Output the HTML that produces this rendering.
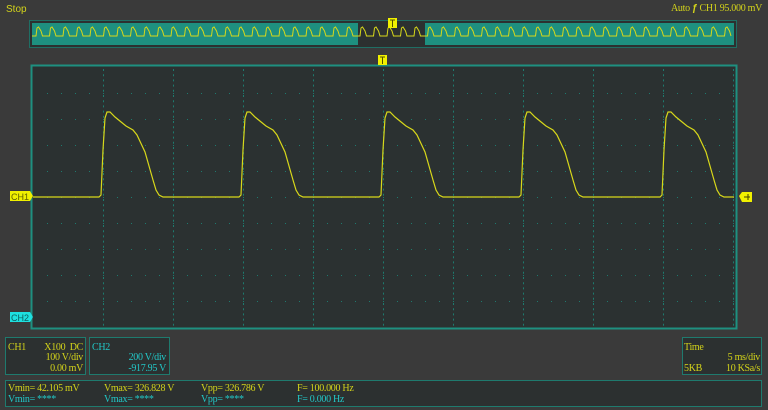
<!DOCTYPE html>
<html><head><meta charset="utf-8">
<style>
html,body{margin:0;padding:0;background:#3a3a3a;width:768px;height:410px;overflow:hidden;font-family:"Liberation Serif",serif;}
.t{position:absolute;font-size:10px;line-height:11px;white-space:nowrap;letter-spacing:-0.3px}
.y{color:#d4d41a}.c{color:#22c8c8}
.r{text-align:right}
.box{position:absolute;border:1px solid #1f7a6e;background:#2c3030;box-sizing:border-box}
</style></head><body>
<div class="t y" style="left:6px;top:4px;font-family:'Liberation Sans',sans-serif;font-size:10px;letter-spacing:0">Stop</div>
<div class="t y r" style="left:600px;width:162px;top:3px;">Auto <b style="font-family:'Liberation Sans'">ƒ</b> CH1 95.000 mV</div>
<svg id="s" width="768" height="410" style="position:absolute;left:0;top:0"></svg>
<div class="box" style="left:5px;top:337px;width:81px;height:38px"></div>
<div class="box" style="left:89px;top:337px;width:81px;height:38px"></div>
<div class="t y" style="left:8px;top:342px">CH1</div>
<div class="t y r" style="left:30px;width:53px;top:342px">X100&nbsp; DC</div>
<div class="t y r" style="left:30px;width:53px;top:352px">100 V/div</div>
<div class="t y r" style="left:30px;width:53px;top:363px">0.00 mV</div>
<div class="t c" style="left:92px;top:342px">CH2</div>
<div class="t c r" style="left:100px;width:66px;top:352px">200 V/div</div>
<div class="t c r" style="left:100px;width:66px;top:363px">-917.95 V</div>
<div class="box" style="left:682px;top:337px;width:80px;height:38px"></div>
<div class="t y" style="left:684px;top:342px">Time</div>
<div class="t y r" style="left:700px;top:352px;width:60px">5 ms/div</div>
<div class="t y" style="left:684px;top:363px">5KB</div>
<div class="t y r" style="left:700px;top:363px;width:60px">10 KSa/s</div>
<div class="box" style="left:5px;top:380px;width:757px;height:27px"></div>
<div class="t y" style="left:8px;top:383px">Vmin= 42.105 mV</div>
<div class="t y" style="left:104px;top:383px">Vmax= 326.828 V</div>
<div class="t y" style="left:201px;top:383px">Vpp= 326.786 V</div>
<div class="t y" style="left:297px;top:383px">F= 100.000 Hz</div>
<div class="t c" style="left:8px;top:394px">Vmin= ****</div>
<div class="t c" style="left:104px;top:394px">Vmax= ****</div>
<div class="t c" style="left:201px;top:394px">Vpp= ****</div>
<div class="t c" style="left:297px;top:394px">F= 0.000 Hz</div>
<script>
var s='';
s+='<rect x="29.5" y="20.5" width="707" height="27" fill="#2c3030" stroke="#1f6e64"/>';
s+='<rect x="32" y="23" width="326" height="22" fill="#1e9080"/>';
s+='<rect x="425" y="23" width="309" height="22" fill="#1e9080"/>';
var m='M32,36';
for(var x=32;x<734;x+=13.5){m+=' L'+(x+4)+',36 L'+(x+5)+',28 L'+(x+6.5)+',27 L'+(x+9)+',31 L'+(x+10.5)+',36';}
s+='<path d="'+m+'" fill="none" stroke="#d8d81a" stroke-width="1"/>';
s+='<rect x="31.5" y="65.5" width="705" height="263" fill="#2b3131" stroke="#1e9080" stroke-width="2"/>';
var d='';
for(var r=1;r<10;r++){var yy=67+26*r;for(var c=47;c<=735;c+=14){d+='M'+c+','+yy+'h1v1h-1z';}}
for(var c=103;c<735;c+=70){for(var yy=69;yy<326;yy+=5.2){d+='M'+c+','+yy.toFixed(1)+'h1v2h-1z';}}
s+='<path d="'+d+'" fill="#1e7a6e"/>';
var p='M33,197';
var pts=[[-2,197],[0,195],[2,150],[4,118],[6,112],[9,112],[14,117],[25,126],[32,130],[36,135],[44,152],[52,180],[55,190],[58,195],[62,197]];
[101,241,381,521,662].forEach(function(x0){pts.forEach(function(q){var X=x0+q[0];if(X<734)p+=' L'+X+','+q[1];});p+=' L'+Math.min(x0+140-2,734)+',197';});
s+='<path d="'+p+'" fill="none" stroke="#d8d81a" stroke-width="1.2"/>';
s+='<path d="M10,191h20l3,5l-3,5h-20z" fill="#f0f000"/><text x="11" y="200" font-size="9" font-family="Liberation Sans" fill="#606000">CH1</text>';
s+='<path d="M10,312h20l3,5l-3,5h-20z" fill="#1ee0e0"/><text x="11" y="321" font-size="9" font-family="Liberation Sans" fill="#0a6060">CH2</text>';
s+='<path d="M739,196l3,-4h10v10h-10z" fill="#f0f000"/><path d="M744,197h6M748,194v6" stroke="#404000" fill="none"/>';
s+='<rect x="378" y="55" width="9" height="10" fill="#f0f000"/><path d="M380,57h5M382.5,57v7" stroke="#505000"/>';
s+='<rect x="388" y="18" width="9" height="10" fill="#f0f000"/><path d="M390,20h5M392.5,20v7" stroke="#505000"/>';
document.getElementById('s').innerHTML=s;
</script>
</body></html>
